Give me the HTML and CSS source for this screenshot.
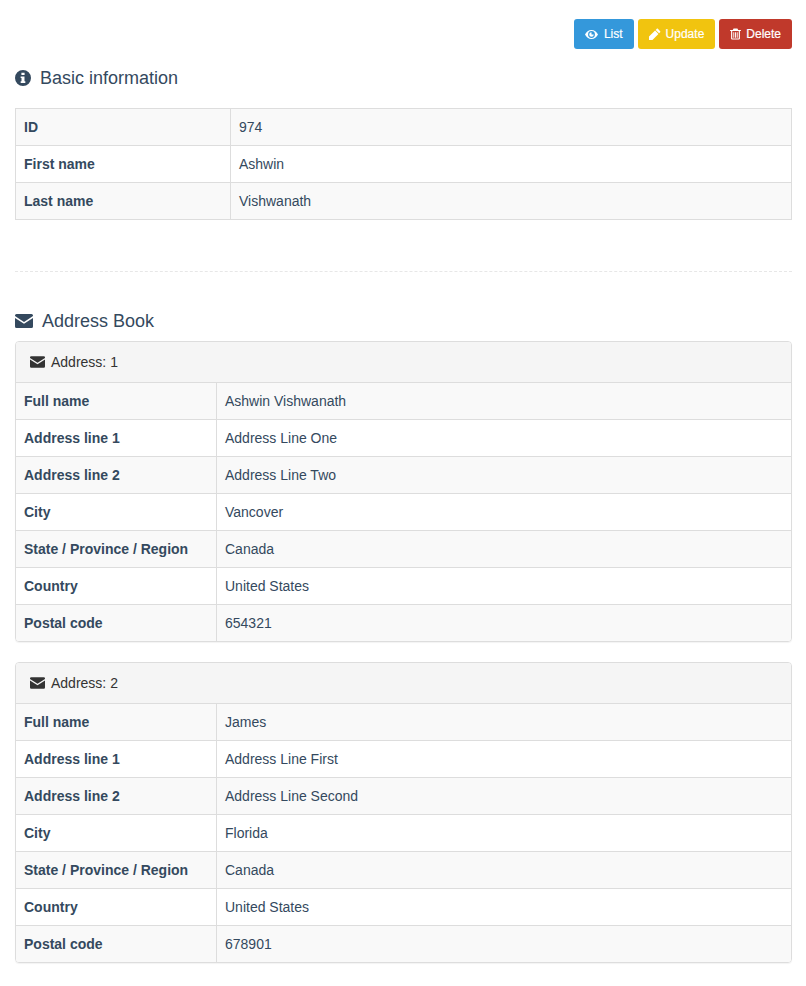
FILE: index.html
```html
<!DOCTYPE html>
<html lang="en">
<head>
<meta charset="utf-8">
<title>Customer</title>
<link rel="stylesheet" href="styles.css">
</head>
<body>
<div class="toolbar">
  <a class="btn btn-list"><svg class="ico" viewBox="0 1.500 16 13"><path fill="currentColor" fill-rule="evenodd" d="M8 2.500C4.500 2.500 1.600 4.700 0 8c1.600 3.300 4.500 5.500 8 5.500s6.400-2.200 8-5.500c-1.600-3.300-4.500-5.500-8-5.500zm0 9.700A4.200 4.200 0 1 1 8 3.800a4.200 4.200 0 0 1 0 8.400zM8 5.200A2.800 2.800 0 1 0 10.800 8H8z"/></svg>List</a>
  <a class="btn btn-update"><svg class="ico" viewBox="0 0 16 16"><path fill="currentColor" d="M11.800 1.100l3.100 3.100c.4.400.4 1 0 1.400l-1.500 1.500-4.500-4.500 1.500-1.500c.4-.4 1-.4 1.400 0zM8.100 3.400l4.500 4.500-8 8H0v-4.500z"/></svg>Update</a>
  <a class="btn btn-delete"><svg class="ico" viewBox="1 0.500 14 15.500"><path fill="currentColor" fill-rule="evenodd" d="M5.500 1h5l1 2H15v1.500h-1.300V14a1.500 1.500 0 0 1-1.500 1.500H3.800A1.500 1.500 0 0 1 2.300 14V4.500H1V3h3.500zM3.800 4.500V14h8.400V4.500zM5.200 6h1.200v7H5.200zm2.200 0h1.200v7H7.400zm2.200 0h1.200v7H9.600z"/></svg>Delete</a>
</div>

<h3 class="section-title"><svg class="ico-info" viewBox="0.5 0.5 15 15"><path fill="currentColor" fill-rule="evenodd" d="M8 .5a7.500 7.500 0 1 1 0 15 7.500 7.500 0 0 1 0-15zM6.500 3v2.300h3V3zm-.7 3.500v1.600h.8v3H5.800v1.600h4.400v-1.600h-.8V6.500z"/></svg>Basic information</h3>
<table class="info-table basic">
  <tbody>
    <tr><th>ID</th><td>974</td></tr>
    <tr><th>First name</th><td>Ashwin</td></tr>
    <tr><th>Last name</th><td>Vishwanath</td></tr>
  </tbody>
</table>

<hr class="divider">

<h3 class="section-title book"><svg class="ico-mail" viewBox="0 0 18 14"><path fill="currentColor" d="M1.500 0h15A1.500 1.500 0 0 1 18 1.500v.6L9 8 0 2.100v-.6A1.500 1.500 0 0 1 1.500 0zM0 3.900l9 5.900 9-5.900v8.600a1.500 1.500 0 0 1-1.500 1.500h-15A1.500 1.500 0 0 1 0 12.500z"/></svg>Address Book</h3>

<section class="panel">
  <div class="panel-heading"><svg class="ico-mail-sm" viewBox="0 0 18 14"><path fill="currentColor" d="M1.500 0h15A1.500 1.500 0 0 1 18 1.500v.6L9 8 0 2.100v-.6A1.500 1.500 0 0 1 1.500 0zM0 3.900l9 5.900 9-5.900v8.600a1.500 1.500 0 0 1-1.500 1.500h-15A1.500 1.500 0 0 1 0 12.500z"/></svg>Address: 1</div>
  <table class="info-table address">
    <tbody>
      <tr><th>Full name</th><td>Ashwin Vishwanath</td></tr>
      <tr><th>Address line 1</th><td>Address Line One</td></tr>
      <tr><th>Address line 2</th><td>Address Line Two</td></tr>
      <tr><th>City</th><td>Vancover</td></tr>
      <tr><th>State / Province / Region</th><td>Canada</td></tr>
      <tr><th>Country</th><td>United States</td></tr>
      <tr><th>Postal code</th><td>654321</td></tr>
    </tbody>
  </table>
</section>

<section class="panel">
  <div class="panel-heading"><svg class="ico-mail-sm" viewBox="0 0 18 14"><path fill="currentColor" d="M1.500 0h15A1.500 1.500 0 0 1 18 1.500v.6L9 8 0 2.100v-.6A1.500 1.500 0 0 1 1.500 0zM0 3.900l9 5.900 9-5.900v8.600a1.500 1.500 0 0 1-1.500 1.500h-15A1.500 1.500 0 0 1 0 12.500z"/></svg>Address: 2</div>
  <table class="info-table address">
    <tbody>
      <tr><th>Full name</th><td>James</td></tr>
      <tr><th>Address line 1</th><td>Address Line First</td></tr>
      <tr><th>Address line 2</th><td>Address Line Second</td></tr>
      <tr><th>City</th><td>Florida</td></tr>
      <tr><th>State / Province / Region</th><td>Canada</td></tr>
      <tr><th>Country</th><td>United States</td></tr>
      <tr><th>Postal code</th><td>678901</td></tr>
    </tbody>
  </table>
</section>
</body>
</html>
```
FILE: styles.css
```css
* { box-sizing: border-box; }
html, body { margin: 0; background: #fff; }
body {
  padding: 19px 14px 23px 15px;
  font-family: "Liberation Sans", Arial, sans-serif;
  font-size: 14px;
  line-height: 20px;
  color: #34495e;
}
.toolbar { display: flex; justify-content: flex-end; gap: 4px; }
.btn {
  display: flex; align-items: center; height: 30px; padding: 0 11px;
  border-radius: 3px; color: #fff; font-size: 12px; font-weight: 400;
  -webkit-text-stroke: 0.2px #fff;
}
.btn-list { background: #3498db; }
.btn-update { background: #f1c40f; }
.btn-delete { background: #c0392b; }
.ico { width: 13px; height: 11px; margin-right: 6px; flex: none; }
.btn-update .ico { width: 12px; height: 12px; margin-right: 5px; }
.btn-delete .ico { width: 11px; height: 12px; margin-right: 5px; }
.section-title {
  display: flex; align-items: center; margin: 19px 0 20px;
  font-size: 18px; line-height: 20px; font-weight: 400; color: #34495e;
}
.ico-info { width: 16px; height: 16px; margin-right: 9px; }
.ico-mail { width: 18px; height: 14px; margin-right: 9px; }
.info-table { width: 100%; border-collapse: separate; border-spacing: 0; table-layout: fixed; }
.info-table th, .info-table td {
  padding: 8px; text-align: left; vertical-align: top;
  border-right: 1px solid #ddd; border-bottom: 1px solid #ddd;
}
.info-table th { font-weight: 700; }
.info-table tr:nth-child(odd) { background: #f9f9f9; }
.basic { border-top: 1px solid #ddd; border-left: 1px solid #ddd; }
.basic th { width: 215px; }
.address th { width: 201px; white-space: nowrap; }
.address tr:last-child th, .address tr:last-child td { border-bottom: 0; }
.address td:last-child { border-right: 0; }
.divider { border: 0; border-top: 1px dashed #e7e7e7; margin: 51px 0 0; }
.book { margin: 39px 0 10px; }
.panel {
  border: 1px solid #ddd; border-radius: 4px; margin-bottom: 20px; overflow: hidden;
  box-shadow: 0 1px 1px rgba(0,0,0,.05);
}
.panel:last-child { margin-bottom: 0; }
.panel-heading {
  display: flex; align-items: center; height: 41px; padding: 0 14px;
  background: #f5f5f5; border-bottom: 1px solid #ddd; color: #333;
}
.ico-mail-sm { width: 15px; height: 12px; margin-right: 6px; }
```
